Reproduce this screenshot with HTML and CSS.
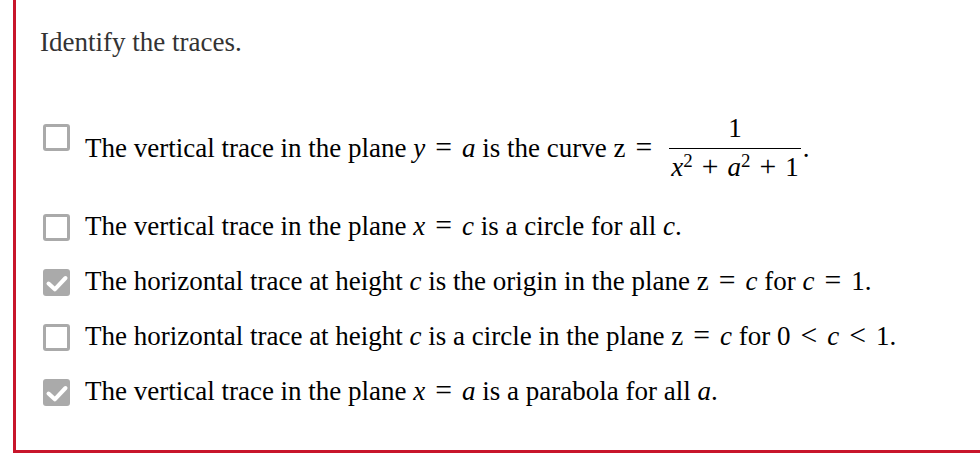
FILE: index.html
```html
<!DOCTYPE html>
<html lang="en">
<head>
<meta charset="utf-8">
<title>Identify the traces</title>
<link rel="stylesheet" href="styles.css">
</head>
<body>
<div class="card">
  <p class="prompt">Identify the traces.</p>
  <ul class="options">
    <li class="option option--tall">
      <span class="box"></span>
      <span class="label">The vertical trace in the plane <i>y</i><span class="op">=</span><i>a</i> is the curve z<span class="op">=</span><span class="frac"><span class="num">1</span><span class="den"><i>x</i><sup>2</sup><span class="op">+</span><i>a</i><sup>2</sup><span class="op">+</span>1</span></span>.</span>
    </li>
    <li class="option">
      <span class="box"></span>
      <span class="label">The vertical trace in the plane <i>x</i><span class="op">=</span><i>c</i> is a circle for all <i>c</i>.</span>
    </li>
    <li class="option">
      <span class="box box--checked"><svg viewBox="0 0 27 27" width="27" height="27"><path d="M5.5 14.5 L11.8 20.3 L22.5 9" fill="none" stroke="#fff" stroke-width="4" stroke-linecap="round" stroke-linejoin="round"/></svg></span>
      <span class="label">The horizontal trace at height <i>c</i> is the origin in the plane z<span class="op">=</span><i>c</i> for <i>c</i><span class="op">=</span>1.</span>
    </li>
    <li class="option">
      <span class="box"></span>
      <span class="label">The horizontal trace at height <i>c</i> is a circle in the plane z<span class="op">=</span><i>c</i> for 0<span class="op">&lt;</span><i>c</i><span class="op">&lt;</span>1.</span>
    </li>
    <li class="option">
      <span class="box box--checked"><svg viewBox="0 0 27 27" width="27" height="27"><path d="M5.5 14.5 L11.8 20.3 L22.5 9" fill="none" stroke="#fff" stroke-width="4" stroke-linecap="round" stroke-linejoin="round"/></svg></span>
      <span class="label">The vertical trace in the plane <i>x</i><span class="op">=</span><i>a</i> is a parabola for all <i>a</i>.</span>
    </li>
  </ul>
</div>
</body>
</html>
```

FILE: styles.css
```css
html, body {
  margin: 0;
  padding: 0;
  background: #fff;
  overflow: hidden;
}

body {
  font-family: "Liberation Serif", "Times New Roman", serif;
  font-size: 27px;
  color: #000;
}

.card {
  margin-left: 13px;
  border-left: 3px solid #c8152b;
  border-bottom: 3px solid #c8152b;
  padding: 27px 0 43px 24px;
}

.prompt {
  margin: 0 0 52px 0;
  color: #333;
  line-height: 31px;
}

.options {
  list-style: none;
  margin: 0;
  padding: 0;
  display: flex;
  flex-direction: column;
  gap: 24px;
}

.option {
  display: flex;
  align-items: flex-start;
  gap: 15px;
  line-height: 31px;
}

.option--tall {
  margin-bottom: 2px;
}

.box {
  flex: none;
  box-sizing: border-box;
  width: 27px;
  height: 27px;
  margin-top: 3px;
  margin-left: 3px;
  border: 3px solid #aaa;
  border-radius: 3px;
  background: #fff;
  display: flex;
  align-items: center;
  justify-content: center;
}

.option--tall .box {
  margin-top: 14px;
}

.box--checked {
  background: #aaa;
  border: none;
}

.box svg {
  display: block;
}

.label i {
  font-style: italic;
}

.op {
  font-size: 1.1em;
  line-height: 0;
  margin: 0 10px;
}

.frac {
  display: inline-block;
  vertical-align: -19px;
  text-align: center;
  margin: 0 2px 0 7px;
}

.den .op {
  margin: 0 9px;
}

.num {
  display: block;
  line-height: 36px;
  padding-bottom: 2px;
  border-bottom: 1px solid #000;
}

.den {
  display: block;
  line-height: 36px;
  padding: 0 2px;
}

sup {
  font-size: 0.7em;
  line-height: 0;
  vertical-align: 0.5em;
}
```
